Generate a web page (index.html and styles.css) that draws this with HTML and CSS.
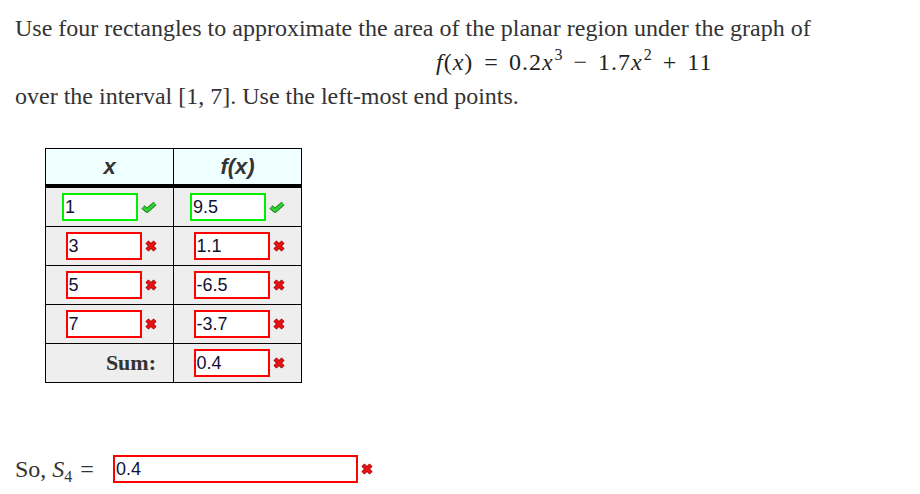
FILE: index.html
```html
<!DOCTYPE html>
<html>
<head>
<meta charset="utf-8">
<link rel="stylesheet" href="styles.css">
</head>
<body>
<div class="page">
  <p class="line">Use four rectangles to approximate the area of the planar region under the graph of</p>
  <div class="display"><span class="mi">f</span><span class="mo">(</span><span class="mi">x</span><span class="mo">)</span><span class="rel">=</span><span class="mn">0.2</span><span class="mi">x</span><sup>3</sup><span class="bin">−</span><span class="mn">1.7</span><span class="mi">x</span><sup>2</sup><span class="bin">+</span><span class="mn">11</span></div>
  <p class="line">over the interval [1, 7]. Use the left-most end points.</p>

  <div class="grid">
    <div class="cell head"><span>x</span></div>
    <div class="cell head"><span>f(x)</span></div>

    <div class="cell"><input class="ans ok" value="1"><svg class="ico check" width="16" height="12" viewBox="0 0 16 12"><polyline points="2,6 6,9.5 14,2.5" fill="none" stroke="#1f7d1f" stroke-width="4.4" stroke-linejoin="round"/><polyline points="2,6 6,9.5 14,2.5" fill="none" stroke="#2fd62f" stroke-width="2.6" stroke-linejoin="round"/></svg></div>
    <div class="cell"><input class="ans ok" value="9.5"><svg class="ico check" width="16" height="12" viewBox="0 0 16 12"><polyline points="2,6 6,9.5 14,2.5" fill="none" stroke="#1f7d1f" stroke-width="4.4" stroke-linejoin="round"/><polyline points="2,6 6,9.5 14,2.5" fill="none" stroke="#2fd62f" stroke-width="2.6" stroke-linejoin="round"/></svg></div>

    <div class="cell"><input class="ans bad" value="3"><span class="xwrap"><svg class="ico cross" width="12" height="12" viewBox="0 0 12 12"><path d="M2 2L10 10M10 2L2 10" stroke="#8a0a0a" stroke-width="4.4"/><path d="M2 2L10 10M10 2L2 10" stroke="#ee1111" stroke-width="3"/></svg></span></div>
    <div class="cell"><input class="ans bad" value="1.1"><span class="xwrap"><svg class="ico cross" width="12" height="12" viewBox="0 0 12 12"><path d="M2 2L10 10M10 2L2 10" stroke="#8a0a0a" stroke-width="4.4"/><path d="M2 2L10 10M10 2L2 10" stroke="#ee1111" stroke-width="3"/></svg></span></div>

    <div class="cell"><input class="ans bad" value="5"><span class="xwrap"><svg class="ico cross" width="12" height="12" viewBox="0 0 12 12"><path d="M2 2L10 10M10 2L2 10" stroke="#8a0a0a" stroke-width="4.4"/><path d="M2 2L10 10M10 2L2 10" stroke="#ee1111" stroke-width="3"/></svg></span></div>
    <div class="cell"><input class="ans bad" value="-6.5"><span class="xwrap"><svg class="ico cross" width="12" height="12" viewBox="0 0 12 12"><path d="M2 2L10 10M10 2L2 10" stroke="#8a0a0a" stroke-width="4.4"/><path d="M2 2L10 10M10 2L2 10" stroke="#ee1111" stroke-width="3"/></svg></span></div>

    <div class="cell"><input class="ans bad" value="7"><span class="xwrap"><svg class="ico cross" width="12" height="12" viewBox="0 0 12 12"><path d="M2 2L10 10M10 2L2 10" stroke="#8a0a0a" stroke-width="4.4"/><path d="M2 2L10 10M10 2L2 10" stroke="#ee1111" stroke-width="3"/></svg></span></div>
    <div class="cell"><input class="ans bad" value="-3.7"><span class="xwrap"><svg class="ico cross" width="12" height="12" viewBox="0 0 12 12"><path d="M2 2L10 10M10 2L2 10" stroke="#8a0a0a" stroke-width="4.4"/><path d="M2 2L10 10M10 2L2 10" stroke="#ee1111" stroke-width="3"/></svg></span></div>

    <div class="cell sum">Sum:</div>
    <div class="cell"><input class="ans bad" value="0.4"><span class="xwrap"><svg class="ico cross" width="12" height="12" viewBox="0 0 12 12"><path d="M2 2L10 10M10 2L2 10" stroke="#8a0a0a" stroke-width="4.4"/><path d="M2 2L10 10M10 2L2 10" stroke="#ee1111" stroke-width="3"/></svg></span></div>
  </div>

  <div class="final">
    <span class="so">So, <span class="mi">S</span><sub>4</sub><span class="rel">=</span></span>
    <input class="ans bad wide" value="0.4">
    <svg class="ico cross" width="12" height="12" viewBox="0 0 12 12"><path d="M2 2L10 10M10 2L2 10" stroke="#8a0a0a" stroke-width="4.4"/><path d="M2 2L10 10M10 2L2 10" stroke="#ee1111" stroke-width="3"/></svg>
  </div>
</div>
</body>
</html>
```

FILE: styles.css
```css
html, body {
  margin: 0;
  padding: 0;
  background: #ffffff;
}

.page {
  padding: 12px 15px 0 15px;
  font-family: "Liberation Serif", "Times New Roman", serif;
  font-size: 24px;
  color: #333333;
}

.line {
  margin: 0;
  line-height: 32px;
  white-space: nowrap;
}

.display {
  line-height: 36px;
  padding-left: 421px;
  white-space: nowrap;
  color: #222222;
}

.mi {
  font-style: italic;
}

.mo {
  margin: 0 1px;
}

.mn {
  letter-spacing: 1px;
}

.rel {
  margin: 0 11px;
}

.bin {
  margin: 0 11px;
}

sup {
  font-size: 16px;
  vertical-align: 10px;
  line-height: 0;
  margin-left: 2px;
}

sub {
  font-size: 16px;
  vertical-align: -5px;
  line-height: 0;
}

.grid {
  display: grid;
  grid-template-columns: 128px 128px;
  width: 256px;
  margin: 36px 0 0 30px;
  border-left: 1px solid #000;
  border-top: 1px solid #000;
}

.cell {
  display: flex;
  align-items: center;
  justify-content: center;
  gap: 3px;
  height: 38px;
  background: #eeeeee;
  border-right: 1px solid #000;
  border-bottom: 1px solid #000;
}

.cell.head {
  height: 35px;
  background: #f0ffff;
  border-bottom: 4px solid #000;
  font-family: "Liberation Sans", Arial, sans-serif;
  font-weight: bold;
  font-style: italic;
  font-size: 22px;
  color: #333333;
}

.cell.sum {
  justify-content: flex-end;
  padding-right: 17px;
  font-family: "Liberation Serif", serif;
  font-weight: bold;
  font-size: 22px;
  color: #333333;
}

.ans {
  box-sizing: border-box;
  width: 76px;
  height: 28px;
  margin: 0;
  padding: 0 1px;
  font-family: "Liberation Sans", Arial, sans-serif;
  font-size: 18px;
  color: #111133;
  background: #ffffff;
  border: 2px solid #ff0000;
  outline: none;
}

.ans.ok {
  border-color: #00ee00;
}

.xwrap {
  display: inline-block;
  width: 9px;
  height: 12px;
  overflow: visible;
}

.ico {
  display: block;
  flex: none;
}

.final {
  display: flex;
  align-items: center;
  margin-top: 72px;
  gap: 3px;
}

.so {
  white-space: nowrap;
}

.final .rel {
  margin: 0 0 0 8px;
}

.ans.wide {
  width: 245px;
  margin-left: 16px;
}
```
